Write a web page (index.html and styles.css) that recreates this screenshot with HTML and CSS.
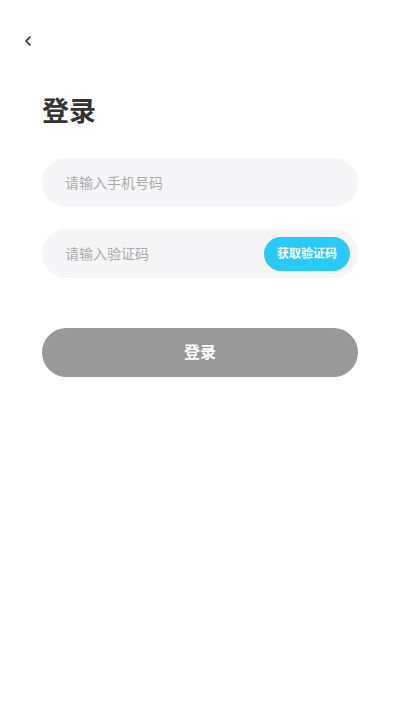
FILE: index.html
```html
<!DOCTYPE html>
<html lang="zh">
<head>
<meta charset="utf-8">
<link rel="stylesheet" href="styles.css">
</head>
<body>
<div class="page">
  <div class="nav">
    <svg class="back" width="10" height="12" viewBox="0 0 10 12"><path d="M7 2 L3 6 L7 10" fill="none" stroke="#222" stroke-width="1.6" stroke-linecap="round" stroke-linejoin="round"/></svg>
  </div>
  <h1 class="title">登录</h1>
  <div class="form">
    <div class="field"><span class="ph">请输入手机号码</span></div>
    <div class="field code"><span class="ph">请输入验证码</span><span class="getcode">获取验证码</span></div>
  </div>
  <div class="submit">登录</div>
</div>
</body>
</html>
```

FILE: styles.css
```css
html, body { margin: 0; padding: 0; background: #fff; }
body { font-family: "Noto Sans CJK SC", "Noto Sans", sans-serif; }
.page { width: 400px; height: 711px; box-sizing: border-box; padding: 0 42px; }
.nav { height: 92px; display: flex; align-items: flex-start; padding-top: 35px; box-sizing: border-box; margin-left: -19px; }
.back { display: block; }
.title { margin: 0; font-size: 27px; line-height: 36px; font-weight: 700; color: #333; height: 66px; }
.form { display: flex; flex-direction: column; gap: 22px; }
.field { height: 49px; box-sizing: border-box; border-radius: 25px; background: #f5f5f7; display: flex; align-items: center; justify-content: space-between; padding: 0 8px 2px 23px; }
.ph { font-size: 14px; line-height: 20px; color: #aaa; }
.getcode { height: 34px; width: 86px; margin-top: 2px; border-radius: 17px; background: #29c9f9; color: #fff; font-size: 12px; font-weight: 700; display: flex; align-items: center; justify-content: center; padding-bottom: 2px; box-sizing: border-box; }
.submit { margin-top: 50px; height: 49px; box-sizing: border-box; padding-bottom: 3px; border-radius: 25px; background: #999; color: #fff; font-size: 16px; font-weight: 700; display: flex; align-items: center; justify-content: center; }
```
